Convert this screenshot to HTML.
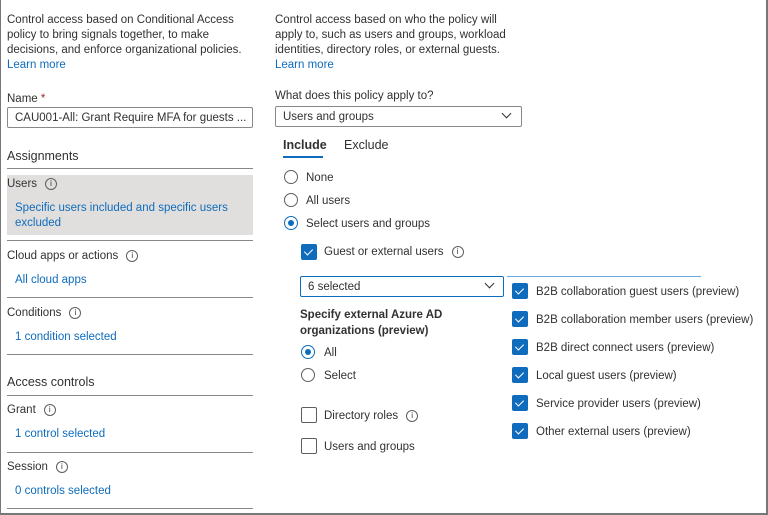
<!DOCTYPE html>
<html><head><style>
body{margin:0;width:768px;height:515px;position:relative;overflow:hidden;background:#fff;font-family:"Liberation Sans",sans-serif;font-size:11.5px;color:#323130}
.a{position:absolute;white-space:nowrap;line-height:15px;transform:translateY(1px)}
.b{color:#0f6cbd}
.ln{position:absolute;left:7px;width:246px;height:1px;background:#8a8886}
.rad{position:absolute;width:14px;height:14px;border:1px solid #605e5c;border-radius:50%;box-sizing:border-box}
.rad.on{border-color:#0f6cbd}
.rad.on:after{content:"";position:absolute;left:3px;top:3px;width:6px;height:6px;border-radius:50%;background:#0f6cbd}
.cb{position:absolute;width:16px;height:16px;border:1px solid #605e5c;border-radius:2px;box-sizing:border-box}
.cb.on{background:#0f6cbd;border-color:#0f6cbd}
.cb.on:after{content:"";position:absolute;left:4px;top:2px;width:4px;height:7px;border:solid #fff;border-width:0 1px 1px 0;transform:rotate(45deg)}
.i{display:inline-block;width:10px;height:10px;border:1px solid #605e5c;border-radius:50%;font-size:8px;line-height:10px;text-align:center;margin-left:8px;vertical-align:1px}
.chev{position:absolute;width:6px;height:6px;border:solid #323130;border-width:0 1px 1px 0;transform:rotate(45deg)}
</style></head><body>
<div style="position:absolute;left:0;top:0;width:1px;height:515px;background:#777"></div>
<div style="position:absolute;right:0;top:0;width:2px;height:515px;background:#777"></div>
<div style="position:absolute;left:0;bottom:0;width:768px;height:2px;background:#777"></div>

<div class="a" style="left:7px;top:12px">Control access based on Conditional Access<br>policy to bring signals together, to make<br>decisions, and enforce organizational policies.<br><span class="b">Learn more</span></div>
<div class="a" style="left:7px;top:91px">Name <span style="color:#a4262c">*</span></div>
<div style="position:absolute;left:7px;top:107px;width:246px;height:21px;border:1px solid #8a8886;box-sizing:border-box;border-radius:2px"></div>
<div class="a" style="left:15px;top:110px">CAU001-All: Grant Require MFA for guests ...</div>
<div class="a" style="left:7px;top:148px;font-size:12.5px">Assignments</div>
<div class="ln" style="top:168px"></div>
<div style="position:absolute;left:7px;top:175px;width:246px;height:60px;background:#e1dfdd"></div>
<div class="a" style="left:7px;top:176px">Users<span class="i">i</span></div>
<div class="a b" style="left:15px;top:200px">Specific users included and specific users<br>excluded</div>
<div class="ln" style="top:240px"></div>
<div class="a" style="left:7px;top:248px">Cloud apps or actions<span class="i">i</span></div>
<div class="a b" style="left:15px;top:272px">All cloud apps</div>
<div class="ln" style="top:297px"></div>
<div class="a" style="left:7px;top:305px">Conditions<span class="i">i</span></div>
<div class="a b" style="left:15px;top:329px">1 condition selected</div>
<div class="ln" style="top:354px"></div>
<div class="a" style="left:7px;top:374px;font-size:12.5px">Access controls</div>
<div class="ln" style="top:395px"></div>
<div class="a" style="left:7px;top:402px">Grant<span class="i">i</span></div>
<div class="a b" style="left:15px;top:426px">1 control selected</div>
<div class="ln" style="top:452px"></div>
<div class="a" style="left:7px;top:459px">Session<span class="i">i</span></div>
<div class="a b" style="left:15px;top:483px">0 controls selected</div>
<div class="ln" style="top:508px"></div>

<div class="a" style="left:275px;top:12px">Control access based on who the policy will<br>apply to, such as users and groups, workload<br>identities, directory roles, or external guests.<br><span class="b">Learn more</span></div>
<div class="a" style="left:275px;top:88px">What does this policy apply to?</div>
<div style="position:absolute;left:275px;top:106px;width:247px;height:21px;border:1px solid #8a8886;box-sizing:border-box;border-radius:2px"></div>
<div class="a" style="left:283px;top:109px">Users and groups</div>
<div class="chev" style="left:503px;top:110px"></div>
<div class="a" style="left:283px;top:137px;font-size:12.5px;font-weight:bold;color:#323130">Include</div>
<div style="position:absolute;left:283px;top:156px;width:40px;height:2px;background:#0f6cbd"></div>
<div class="a" style="left:344px;top:137px;font-size:12.5px">Exclude</div>
<div class="rad" style="left:284px;top:170px"></div><div class="a" style="left:306px;top:170px">None</div>
<div class="rad" style="left:284px;top:193px"></div><div class="a" style="left:306px;top:193px">All users</div>
<div class="rad on" style="left:284px;top:216px"></div><div class="a" style="left:306px;top:216px">Select users and groups</div>
<div class="cb on" style="left:301px;top:244px"></div><div class="a" style="left:324px;top:244px">Guest or external users<span class="i">i</span></div>
<div style="position:absolute;left:300px;top:276px;width:204px;height:21px;border:1px solid #0f6cbd;box-sizing:border-box;border-radius:2px"></div>
<div class="a" style="left:308px;top:279px">6 selected</div>
<div class="chev" style="left:486px;top:280px"></div>
<div style="position:absolute;left:507px;top:276px;width:194px;height:1px;background:#6aa6e0"></div>
<div class="a" style="left:300px;top:306px;font-weight:bold;line-height:16px">Specify external Azure AD<br>organizations (preview)</div>
<div class="rad on" style="left:301px;top:345px"></div><div class="a" style="left:324px;top:345px">All</div>
<div class="rad" style="left:301px;top:368px"></div><div class="a" style="left:324px;top:368px">Select</div>
<div class="cb" style="left:301px;top:407px"></div><div class="a" style="left:324px;top:408px">Directory roles<span class="i">i</span></div>
<div class="cb" style="left:301px;top:438px"></div><div class="a" style="left:324px;top:439px">Users and groups</div>

<div class="cb on" style="left:512px;top:283px"></div><div class="a" style="left:536px;top:284px">B2B collaboration guest users (preview)</div>
<div class="cb on" style="left:512px;top:311px"></div><div class="a" style="left:536px;top:312px">B2B collaboration member users (preview)</div>
<div class="cb on" style="left:512px;top:339px"></div><div class="a" style="left:536px;top:340px">B2B direct connect users (preview)</div>
<div class="cb on" style="left:512px;top:367px"></div><div class="a" style="left:536px;top:368px">Local guest users (preview)</div>
<div class="cb on" style="left:512px;top:395px"></div><div class="a" style="left:536px;top:396px">Service provider users (preview)</div>
<div class="cb on" style="left:512px;top:423px"></div><div class="a" style="left:536px;top:424px">Other external users (preview)</div>
</body></html>
